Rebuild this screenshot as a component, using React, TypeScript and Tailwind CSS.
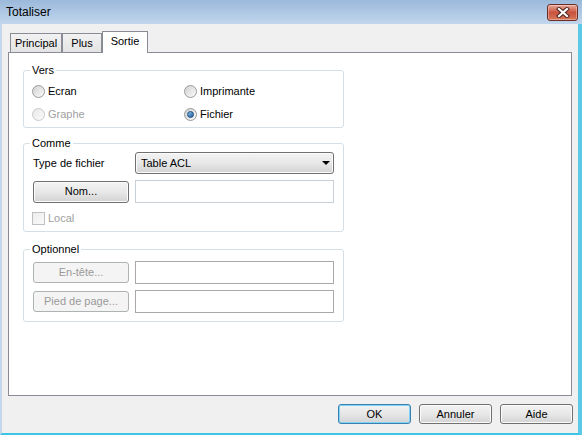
import React from 'react';

const btnFace =
  'rounded-[3px] border border-[#707070] bg-linear-to-b from-[#f3f3f3] via-[#e8e8e8] to-[#d3d3d3] shadow-[inset_0_0_0_1px_#fbfbfb]';
const btn = `flex items-center justify-center ${btnFace}`;
const btnOff =
  'flex items-center justify-center rounded-[3px] border border-[#adb2b5] bg-[#f4f4f4] text-[#9a9a9a]';

function Legend({ children }: { children: React.ReactNode }) {
  return <span className="block w-fit -mt-[7px] ml-[6px] px-[2px] bg-white leading-[13px]">{children}</span>;
}

function Radio({ label, checked, disabled }: { label: string; checked?: boolean; disabled?: boolean }) {
  return (
    <div className={`flex items-center gap-[3px] h-[16px] ${disabled ? 'text-[#a0a0a0]' : ''}`}>
      <span
        className={`w-[13px] h-[13px] rounded-full border flex items-center justify-center ${
          disabled
            ? 'border-[#c8c8c8] bg-linear-to-br from-[#e8e8e8] to-[#fbfbfb]'
            : 'border-[#999a9a] bg-linear-to-br from-[#d2d2d2] to-[#fbfbfb]'
        }`}
      >
        {checked && (
          <span className="w-[7px] h-[7px] rounded-full border border-[#1b4d7e] bg-linear-to-br from-[#8cc2ec] to-[#1d5d9c]" />
        )}
      </span>
      <span>{label}</span>
    </div>
  );
}

function CloseButton() {
  return (
    <div className="mt-[4px] w-[31px] h-[17px] rounded-[3px] border border-[#6d2d25] bg-linear-to-b from-[#e8a898] via-[#c9533d] to-[#d6765a] shadow-[inset_0_0_0_1px_rgba(255,255,255,0.35)] flex items-center justify-center">
      <svg width="14" height="11" viewBox="0 0 14 11">
        <path d="M3 2 L11 9 M11 2 L3 9" stroke="#4b2622" strokeWidth="4.2" strokeLinecap="square" fill="none" />
        <path d="M3 2 L11 9 M11 2 L3 9" stroke="#ffffff" strokeWidth="2.2" strokeLinecap="square" fill="none" />
      </svg>
    </div>
  );
}

export default function App() {
  return (
    <div className="w-[582px] h-[435px] flex flex-col overflow-hidden bg-[#f0f0f0] text-[11px] leading-[13px] text-black font-['Liberation_Sans',Arial,sans-serif]">
      {/* title bar */}
      <div className="h-[24px] shrink-0 flex items-start justify-between pl-[6px] pr-[4px] bg-linear-to-b from-[#9bb9db] to-[#c1d6ed]">
        <span className="text-[12px] leading-[24px]">Totaliser</span>
        <CloseButton />
      </div>

      <div className="flex-1 flex flex-col pl-[6px] pt-[7px] pr-[5px] border-l-2 border-l-[#c3d6ec] border-r-4 border-r-[#5cc9e8] border-b-2 border-b-[#3cc3e6]">
        {/* tabs */}
        <div className="flex items-end h-[21px] pl-[2px]">
          <div className="w-[52px] h-[19px] border border-b-0 border-[#898c95] bg-linear-to-b from-[#f2f2f2] to-[#e3e3e3] flex items-center justify-center">
            Principal
          </div>
          <div className="w-[40px] h-[19px] border border-b-0 border-[#898c95] bg-linear-to-b from-[#f2f2f2] to-[#e3e3e3] flex items-center justify-center">
            Plus
          </div>
          <div className="relative w-[46px] h-[22px] -mb-px border border-b-0 border-[#898c95] bg-white flex items-center justify-center pb-[2px]">
            Sortie
          </div>
        </div>

        {/* panel */}
        <div className="w-[564px] h-[344px] border border-[#898c95] bg-white pl-[14px] pt-[17px]">
          <div className="w-[321px] h-[58px] border border-[#d5dfe5] rounded-[3px]">
            <Legend>Vers</Legend>
            <div className="grid grid-cols-[152px_1fr] gap-y-[7px] pl-[8px] mt-[6px]">
              <Radio label="Ecran" />
              <Radio label="Imprimante" />
              <Radio label="Graphe" disabled />
              <Radio label="Fichier" checked />
            </div>
          </div>

          <div className="mt-[15px] w-[321px] h-[89px] border border-[#d5dfe5] rounded-[3px]">
            <Legend>Comme</Legend>
            <div className="mt-[2px] h-[22px] flex items-center pl-[9px]">
              <span className="w-[102px]">Type de fichier</span>
              <div className={`flex items-center justify-between w-[199px] h-[22px] pl-[5px] pr-[3px] ${btnFace}`}>
                <span>Table ACL</span>
                <svg width="8" height="4" viewBox="0 0 8 4">
                  <polygon points="0,0 8,0 4,4" fill="#000" />
                </svg>
              </div>
            </div>
            <div className="mt-[6px] h-[23px] flex items-center gap-[6px] pl-[9px]">
              <div className={`${btn} w-[96px] h-[22px]`}>Nom...</div>
              <div className="w-[199px] h-[23px] border border-[#c9cfd6] bg-white" />
            </div>
            <div className="mt-[8px] h-[14px] flex items-center gap-[3px] pl-[8px] text-[#a0a0a0]">
              <span className="w-[13px] h-[13px] border border-[#c0c0c0] bg-linear-to-br from-[#ececec] to-[#fafafa]" />
              <span>Local</span>
            </div>
          </div>

          <div className="mt-[17px] w-[321px] h-[73px] border border-[#d5dfe5] rounded-[3px]">
            <Legend>Optionnel</Legend>
            <div className="mt-[5px] h-[23px] flex items-center gap-[6px] pl-[9px]">
              <div className={`${btnOff} w-[96px] h-[21px]`}>En-tête...</div>
              <div className="w-[199px] h-[23px] border border-[#a9a9a9] bg-white" />
            </div>
            <div className="mt-[6px] h-[23px] flex items-center gap-[6px] pl-[9px]">
              <div className={`${btnOff} w-[96px] h-[21px]`}>Pied de page...</div>
              <div className="w-[199px] h-[23px] border border-[#a9a9a9] bg-white" />
            </div>
          </div>
        </div>

        {/* buttons */}
        <div className="mt-[8px] flex justify-end gap-[8px]">
          <div className="w-[73px] h-[20px] flex items-center justify-center rounded-[3px] border border-[#3c7fb1] bg-linear-to-b from-[#f2f2f2] via-[#e6e6e6] to-[#d4d4d4] shadow-[inset_0_0_0_1px_#7fd3f4]">
            OK
          </div>
          <div className={`${btn} w-[73px] h-[20px]`}>Annuler</div>
          <div className={`${btn} w-[73px] h-[20px]`}>Aide</div>
        </div>
      </div>
    </div>
  );
}
